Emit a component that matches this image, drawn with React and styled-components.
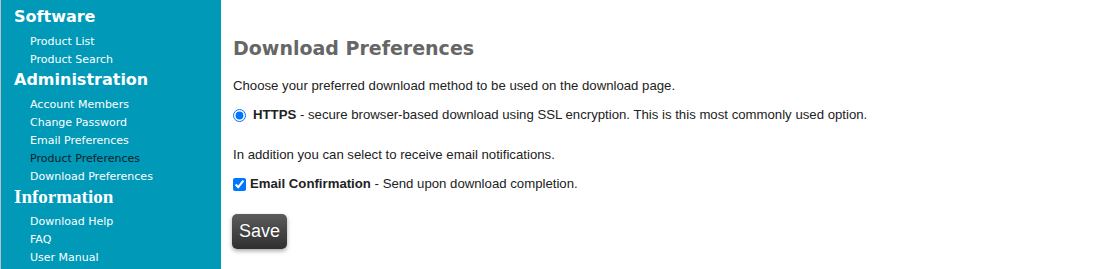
import React from "react";
import styled, { createGlobalStyle } from "styled-components";

const Global = createGlobalStyle`
  html, body { margin: 0; padding: 0; background: #fff; }
  body { font-family: "Liberation Sans", Arial, sans-serif; }
`;

const Page = styled.div`
  display: flex;
  min-height: 100vh;
`;

const Sidebar = styled.nav`
  width: 221px;
  flex: none;
  background: #0099b8;
  border-left: 1px solid #b9c3c6;
  padding: 6px 0 0 0;
  box-sizing: border-box;
  font-family: "DejaVu Sans", Verdana, sans-serif;
`;

const Section = styled.div`
  display: flex;
  flex-direction: column;
`;

const SectionTitle = styled.div`
  color: #fff;
  font-weight: bold;
  font-size: ${(p) => (p.$serif ? "19px" : "16px")};
  font-family: ${(p) => (p.$serif ? '"Liberation Serif", "Times New Roman", serif' : '"DejaVu Sans", Verdana, sans-serif')};
  line-height: 22px;
  padding-left: 13px;
  margin-bottom: 5px;
`;

const NavLink = styled.a`
  display: block;
  color: ${(p) => (p.$active ? "#0b1d2a" : "#fff")};
  font-size: 11px;
  line-height: 18px;
  padding-left: 29px;
  text-decoration: none;
`;

const Main = styled.main`
  flex: 1;
  padding: 36px 0 0 11px;
  color: #222;
  font-size: 13.2px;
`;

const Title = styled.h1`
  margin: 0 0 18px 1px;
  font-family: "DejaVu Sans", Verdana, sans-serif;
  font-size: 19px;
  line-height: 24px;
  color: #666;
  font-weight: bold;
`;

const Para = styled.p`
  margin: 0 0 ${(p) => p.$mb}px 1px;
  line-height: 16px;
`;

const OptionRow = styled.label`
  display: flex;
  align-items: center;
  gap: ${(p) => p.$gap}px;
  line-height: 16px;
  margin-bottom: ${(p) => p.$mb}px;
`;

const Radio = styled.input.attrs({ type: "radio" })`
  margin: 0 0 0 1px;
  width: 13px;
  height: 13px;
  accent-color: #0075ff;
`;

const Check = styled.input.attrs({ type: "checkbox" })`
  margin: 0 0 0 1px;
  width: 13px;
  height: 13px;
  accent-color: #0075ff;
`;

const SaveButton = styled.button`
  font-family: "Liberation Sans", Arial, sans-serif;
  font-size: 18px;
  color: #fff;
  background: linear-gradient(#5c5c5c, #2f2f2f);
  border: none;
  border-radius: 5px;
  width: 55px;
  height: 35px;
  padding: 0;
  box-shadow: 0 2px 4px rgba(0,0,0,0.35);
  text-shadow: 0 0 1px rgba(0,0,0,0.5);
  cursor: pointer;
`;

const sections = [
  { title: "Software", links: ["Product List", "Product Search"] },
  {
    title: "Administration",
    links: ["Account Members", "Change Password", "Email Preferences", "Product Preferences", "Download Preferences"],
  },
  { title: "Information", serif: true, links: ["Download Help", "FAQ", "User Manual"] },
];

export default function App() {
  return (
    <Page>
      <Global />
      <Sidebar>
        {sections.map((s) => (
          <Section key={s.title}>
            <SectionTitle $serif={s.serif}>{s.title}</SectionTitle>
            {s.links.map((l) => (
              <NavLink key={l} href="#" $active={l === "Product Preferences"}>
                {l}
              </NavLink>
            ))}
          </Section>
        ))}
      </Sidebar>
      <Main>
        <Title>Download Preferences</Title>
        <Para $mb={13}>Choose your preferred download method to be used on the download page.</Para>
        <OptionRow $gap={7} $mb={24}>
          <Radio name="method" defaultChecked />
          <span>
            <b>HTTPS</b> - secure browser-based download using SSL encryption. This is this most commonly used option.
          </span>
        </OptionRow>
        <Para $mb={13}>In addition you can select to receive email notifications.</Para>
        <OptionRow $gap={4} $mb={22}>
          <Check defaultChecked />
          <span>
            <b>Email Confirmation</b> - Send upon download completion.
          </span>
        </OptionRow>
        <SaveButton>Save</SaveButton>
      </Main>
    </Page>
  );
}
